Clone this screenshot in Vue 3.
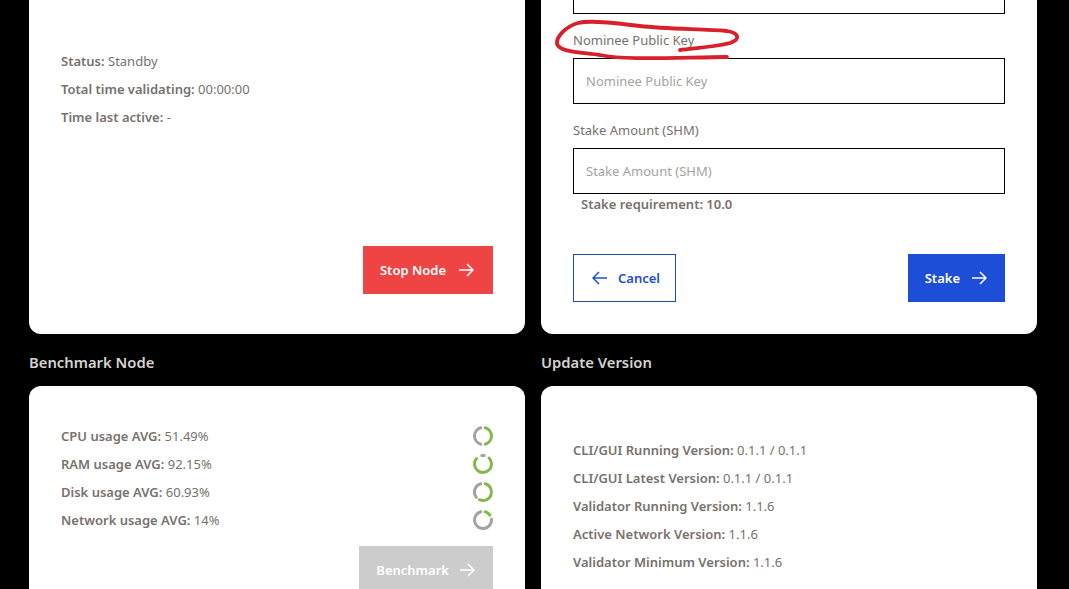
<script setup>
const statusRows = [
  ['Status:', 'Standby'],
  ['Total time validating:', '00:00:00'],
  ['Time last active:', '-'],
]

function arc(cy, from, to) {
  const r = 8.5
  const cx = 483
  const pt = (deg) => {
    const a = (deg * Math.PI) / 180
    return `${(cx + r * Math.sin(a)).toFixed(2)} ${(cy - r * Math.cos(a)).toFixed(2)}`
  }
  const large = to - from > 180 ? 1 : 0
  return `M${pt(from)}A${r} ${r} 0 ${large} 1 ${pt(to)}`
}

const usage = [
  { label: 'CPU usage AVG:', value: '51.49%', green: arc(436, 15, 165), gray: arc(436, 195, 345) },
  { label: 'RAM usage AVG:', value: '92.15%', green: arc(464, 45, 310), gray: arc(464, -8, 8) },
  { label: 'Disk usage AVG:', value: '60.93%', green: arc(492, 15, 205), gray: arc(492, 232, 345) },
  { label: 'Network usage AVG:', value: '14%', green: arc(520, 15, 55), gray: arc(520, 85, 345) },
]
const versions = [
  ['CLI/GUI Running Version:', '0.1.1 / 0.1.1'],
  ['CLI/GUI Latest Version:', '0.1.1 / 0.1.1'],
  ['Validator Running Version:', '1.1.6'],
  ['Active Network Version:', '1.1.6'],
  ['Validator Minimum Version:', '1.1.6'],
]
</script>

<template>
  <div class="page">
    <div class="grid">
      <section class="card top-left">
        <div class="rows">
          <p v-for="row in statusRows" :key="row[0]" class="row"><b>{{ row[0] }}</b> {{ row[1] }}</p>
        </div>
        <div class="actions end">
          <button class="btn red">Stop Node
            <svg class="arrow" viewBox="0 0 16 16"><path d="M1 8h14M9 2l6 6-6 6" /></svg>
          </button>
        </div>
      </section>

      <section class="card top-right">
        <div class="input stub"></div>
        <label class="label">Nominee Public Key</label>
        <div class="input">Nominee Public Key</div>
        <label class="label second">Stake Amount (SHM)</label>
        <div class="input">Stake Amount (SHM)</div>
        <p class="req">Stake requirement: 10.0</p>
        <div class="actions between">
          <button class="btn outline">
            <svg class="arrow" viewBox="0 0 16 16"><path d="M15 8H1M7 2L1 8l6 6" /></svg>
            Cancel
          </button>
          <button class="btn blue">Stake
            <svg class="arrow" viewBox="0 0 16 16"><path d="M1 8h14M9 2l6 6-6 6" /></svg>
          </button>
        </div>
      </section>

      <h2 class="title">Benchmark Node</h2>
      <h2 class="title">Update Version</h2>

      <section class="card bench">
        <div v-for="u in usage" :key="u.label" class="usage">
          <p class="row"><b>{{ u.label }}</b> {{ u.value }}</p>
        </div>
        <div class="actions end bench-actions">
          <button class="btn gray">Benchmark
            <svg class="arrow" viewBox="0 0 16 16"><path d="M1 8h14M9 2l6 6-6 6" /></svg>
          </button>
        </div>
        <svg class="rings" viewBox="468 422 30 112">
          <g v-for="u in usage" :key="u.label" fill="none" stroke-width="3" stroke-linecap="round">
            <path :d="u.green" stroke="#84b84f" />
            <path :d="u.gray" stroke="#a3a3a3" />
          </g>
        </svg>
      </section>

      <section class="card update">
        <p v-for="v in versions" :key="v[0]" class="row"><b>{{ v[0] }}</b> {{ v[1] }}</p>
      </section>
    </div>

    <svg class="scribble" viewBox="0 0 1069 589">
      <path d="M680 50C695 48 715 47 730 43C741 39 739 33 727 31C700 29 665 29 640 26C615 23 590 20 578 23C565 27 556 37 557 44C560 52 578 52 600 55C625 60 660 58 727 57" />
    </svg>
  </div>
</template>

<style>
html, body { margin: 0; background: #000; overflow: hidden; }
</style>

<style scoped>
.page {
  position: relative;
  width: 1069px;
  height: 589px;
  overflow: hidden;
  background: #000;
  font-family: "Noto Sans", "Open Sans", sans-serif;
  font-size: 13px;
  color: #78716c;
}
.grid {
  display: grid;
  grid-template-columns: 496px 496px;
  column-gap: 16px;
  padding-left: 29px;
  margin-top: -40px;
}
.card {
  background: #fff;
  border-radius: 12px;
  padding: 32px;
  box-sizing: border-box;
  position: relative;
}
.top-left, .top-right { height: 374px; }
.top-left { display: flex; flex-direction: column; padding-top: 87px; padding-bottom: 40px; }
.rows { flex: 1; }
.row { margin: 0; line-height: 28px; white-space: nowrap; }
.row b { font-weight: 600; }
.title {
  margin: 0;
  height: 52px;
  padding-top: 4px;
  box-sizing: border-box;
  display: flex;
  align-items: center;
  font-size: 14.8px;
  font-weight: 600;
  color: #d6d3d1;
}
.input {
  height: 46px;
  box-sizing: border-box;
  border: 1px solid #000;
  padding: 0 12px;
  display: flex;
  align-items: center;
  color: #a8a29e;
}
.stub { margin-top: -32px; margin-bottom: 14px; height: 54px; }
.label { display: block; line-height: 24px; margin-bottom: 6px; }
.label.second { margin-top: 14px; }
.req { margin: 0; padding: 0 8px; font-weight: 600; line-height: 20px; }
.actions { display: flex; }
.end { justify-content: flex-end; }
.between { justify-content: space-between; margin-top: 40px; }
.btn {
  height: 48px;
  box-sizing: border-box;
  border: 0;
  padding: 0 18px 0 17px;
  display: inline-flex;
  align-items: center;
  gap: 11px;
  font: 600 13px "Noto Sans", "Open Sans", sans-serif;
  color: #fff;
}
.arrow { width: 16px; height: 16px; fill: none; stroke: currentColor; stroke-width: 1.5; }
.red { background: #ef4444; gap: 12px; padding-right: 19px; }
.blue { background: #1d4ed8; }
.gray { background: #cccccc; gap: 10px; }
.outline { background: #fff; border: 1px solid #1e4f9c; color: #1d4ed8; padding: 0 15px 0 18px; gap: 10px; }
.bench { padding-top: 36px; height: 240px; }
.usage { height: 28px; }
.bench-actions { margin-top: 12px; }
.rings {
  position: absolute;
  left: 439px;
  top: 36px;
  width: 30px;
  height: 112px;
}
.update { padding-top: 50px; height: 240px; }
.scribble {
  position: absolute;
  inset: 0;
  width: 1069px;
  height: 589px;
  fill: none;
  stroke: #d8202c;
  stroke-width: 3.8;
  stroke-linecap: round;
}
</style>
